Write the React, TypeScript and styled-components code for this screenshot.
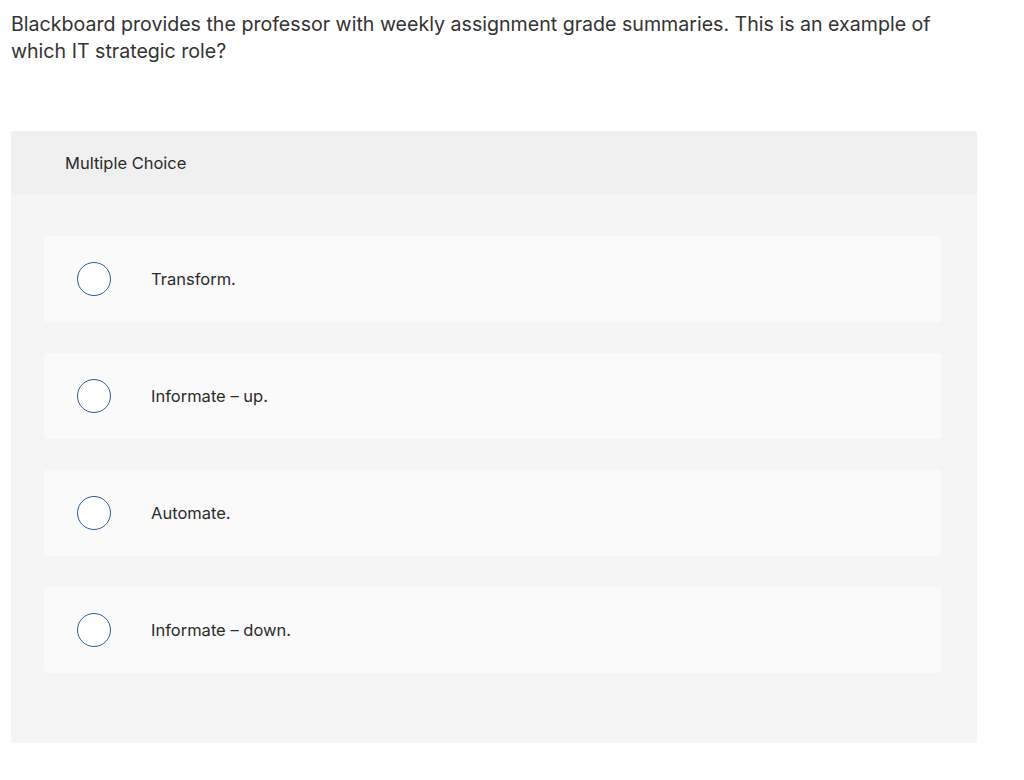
import styled, { createGlobalStyle } from 'styled-components';

const GlobalStyle = createGlobalStyle`
  body {
    margin: 0;
    background: #fff;
    font-family: Inter, "Open Sans", Arial, sans-serif;
    color: #333;
  }
`;

const Page = styled.div`
  width: 966px;
  padding: 11px 0 0 11px;
`;

const Question = styled.p`
  margin: 0;
  font-size: 19.6px;
  line-height: 27px;
  color: #333;
`;

const Panel = styled.section`
  margin-top: 66px;
  background: #f5f5f5;
  border-radius: 3px;
  padding-bottom: 70px;
`;

const PanelHeader = styled.div`
  height: 64px;
  background: #f0f0f0;
  border-radius: 3px 3px 0 0;
  display: flex;
  align-items: center;
  padding-left: 54px;
  font-size: 16.5px;
  color: #2b2b2b;
`;

const OptionList = styled.div`
  display: flex;
  flex-direction: column;
  gap: 31px;
  padding: 41px 35px 0 33px;
`;

const Option = styled.label`
  height: 86px;
  background: #fafafa;
  border-radius: 4px;
  display: flex;
  align-items: center;
  padding-left: 33px;
  cursor: pointer;
`;

const Radio = styled.span`
  width: 32px;
  height: 32px;
  border: 1.5px solid #2d5d96;
  border-radius: 50%;
  background: #fff;
  flex-shrink: 0;
`;

const OptionText = styled.span`
  margin-left: 40px;
  font-size: 16.5px;
  color: #2b2b2b;
`;

const options = ['Transform.', 'Informate \u2013 up.', 'Automate.', 'Informate \u2013 down.'];

export default function App() {
  return (
    <Page>
      <GlobalStyle />
      <Question>
        Blackboard provides the professor with weekly assignment grade summaries. This is an example of which IT
        strategic role?
      </Question>
      <Panel>
        <PanelHeader>Multiple Choice</PanelHeader>
        <OptionList>
          {options.map((o) => (
            <Option key={o}>
              <Radio />
              <OptionText>{o}</OptionText>
            </Option>
          ))}
        </OptionList>
      </Panel>
    </Page>
  );
}
